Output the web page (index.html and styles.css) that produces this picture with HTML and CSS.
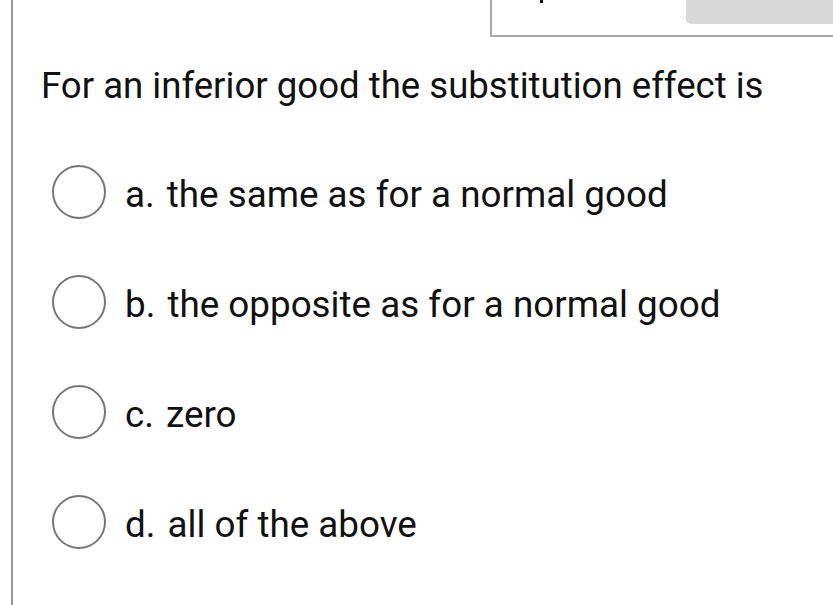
FILE: index.html
```html
<!DOCTYPE html>
<html>
<head>
<meta charset="utf-8">
<link rel="stylesheet" href="styles.css">
</head>
<body>
<div class="page">
  <div class="topbar">
    <div class="topbox">
      <span class="mark"></span>
      <div class="graybtn"></div>
    </div>
  </div>
  <p class="question">For an inferior good the substitution effect is</p>
  <ul class="options">
    <li class="option"><span class="radio"></span><span class="letter">a.</span><span class="text">the same as for a normal good</span></li>
    <li class="option"><span class="radio"></span><span class="letter">b.</span><span class="text">the opposite as for a normal good</span></li>
    <li class="option"><span class="radio"></span><span class="letter">c.</span><span class="text">zero</span></li>
    <li class="option"><span class="radio"></span><span class="letter">d.</span><span class="text">all of the above</span></li>
  </ul>
</div>
</body>
</html>
```
FILE: styles.css
```css
html, body {
  margin: 0;
  padding: 0;
  background: #fff;
}
body {
  font-family: Roboto, "Liberation Sans", sans-serif;
  color: #111;
}
.page {
  margin-left: 11px;
  border-left: 2px solid #9a9a9a;
  height: 605px;
  box-sizing: border-box;
}
.topbar {
  display: flex;
  justify-content: flex-end;
}
.topbox {
  width: 341px;
  height: 35px;
  border-left: 2px solid #a8a8a8;
  border-bottom: 2px solid #a8a8a8;
  display: flex;
  justify-content: space-between;
  align-items: flex-start;
}
.mark {
  width: 3px;
  height: 3px;
  background: #111;
  margin-left: 48px;
}
.graybtn {
  width: 147px;
  height: 24px;
  background: #d9d9d9;
  border-bottom-left-radius: 5px;
}
.question {
  margin: 29px 0 0 28px;
  font-size: 36.6px;
  line-height: 40px;
}
.options {
  list-style: none;
  margin: 59px 0 0 0;
  padding: 0 0 0 39px;
}
.option {
  display: flex;
  align-items: flex-start;
  height: 110px;
  font-size: 36.8px;
  line-height: 40px;
}
.radio {
  width: 50px;
  height: 50px;
  border: 2px solid #777;
  border-radius: 50%;
  flex: none;
}
.letter {
  margin: 10px 0 0 19px;
}
.text {
  margin: 10px 0 0 12px;
}
```
